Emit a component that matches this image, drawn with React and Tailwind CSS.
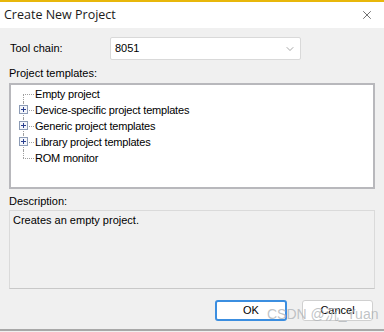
import { ChevronDown, X } from 'lucide-react';

const items = [
  { label: 'Empty project', plus: false },
  { label: 'Device-specific project templates', plus: true },
  { label: 'Generic project templates', plus: true },
  { label: 'Library project templates', plus: true },
  { label: 'ROM monitor', plus: false, last: true },
];

function PlusBox() {
  return (
    <svg width="9" height="9" viewBox="0 0 9 9" className="shrink-0">
      <rect x="0.5" y="0.5" width="8" height="8" fill="#f4f6fb" stroke="#8c9bb5" />
      <path d="M2 4.5h5M4.5 2v5" stroke="#2a3f8f" strokeWidth="1" />
    </svg>
  );
}

function TreeRow({ item, first }) {
  return (
    <div className="relative flex h-4 items-center">
      {/* dotted connector */}
      <div className="relative flex h-4 w-[24px] shrink-0 items-center">
        <div
          className={`absolute left-[12px] border-l border-dotted border-[#a0a0a0] ${
            first ? 'top-2 h-2' : item.last ? 'top-0 h-2' : 'top-0 h-4'
          }`}
        />
        <div className="absolute left-[12px] top-2 w-[11px] border-t border-dotted border-[#a0a0a0]" />
        {item.plus && (
          <div className="relative z-10 ml-[8px] flex bg-white">
            <PlusBox />
          </div>
        )}
      </div>
      <span className="text-[11px] leading-4 tracking-[-0.2px] text-black">{item.label}</span>
    </div>
  );
}

export default function App() {
  return (
    <div
      className="h-[332px] w-[384px] overflow-hidden bg-[#f0f0f0] text-[11px] text-black"
      style={{ fontFamily: '"Liberation Sans", Arial, sans-serif' }}
    >
      {/* title bar */}
      <div className="h-[2px] bg-[#e8b70a]" />
      <div className="flex h-[26px] items-center justify-between bg-white pl-[4px] pr-[10px]">
        <span
          className="text-[12.5px] text-[#1b1b1b]"
          style={{ fontFamily: '"Open Sans", "Noto Sans", sans-serif' }}
        >
          Create New Project
        </span>
        <X size={14} strokeWidth={1.2} className="text-[#333]" />
      </div>

      <div className="px-[9px] pt-[9px]">
        {/* tool chain */}
        <div className="flex items-center">
          <span className="w-[101px] pl-[1px]">Tool chain:</span>
          <div className="flex h-[23px] w-[191px] items-center justify-between rounded-[2px] border border-[#d9d9d9] bg-white pl-[4px] pr-[4px]">
            <span>8051</span>
            <ChevronDown size={12} strokeWidth={1.3} className="text-[#777]" />
          </div>
        </div>

        <div className="mt-[5px]">Project templates:</div>

        <div className="mt-[1px] h-[106px] border-2 border-[#b8b8bc] bg-white pt-[1px]">
          {items.map((item, i) => (
            <TreeRow key={item.label} item={item} first={i === 0} />
          ))}
        </div>

        <div className="mt-[4px]">Description:</div>
        <div className="mt-[1px] h-[79px] border border-[#dadada] border-b-[#c8c8c8] bg-[#f0f0f0] px-[3px] pt-[1px]">
          Creates an empty project.
        </div>

        <div className="mt-[11px] flex justify-end gap-[15px] pr-[2px]">
          <button className="h-[21px] w-[72px] rounded-[3px] border-2 border-[#3b8ee0] bg-white text-[11px]">
            OK
          </button>
          <button className="relative h-[21px] w-[71px] rounded-[3px] border border-[#d0d0d0] bg-white text-[11px]">
            Cancel
            <span
              className="absolute -left-[36px] top-[3px] whitespace-nowrap text-[14px] text-[#b0b4b8]/80"
              style={{ fontFamily: '"Liberation Sans", "Noto Sans CJK SC", sans-serif' }}
            >
              CSDN @沉_Yuan
            </span>
          </button>
        </div>
      </div>
      <div className="mt-[8px] h-[2px] bg-[#a8a8a8]" />
    </div>
  );
}
